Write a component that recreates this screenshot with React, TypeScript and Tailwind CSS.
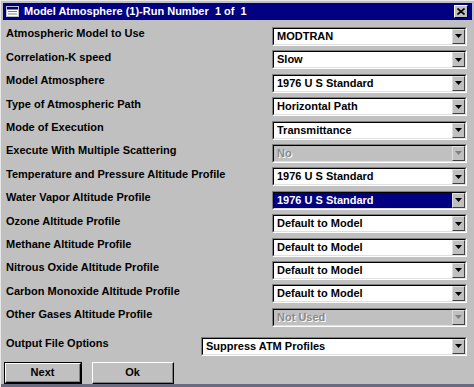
import React from "react";

type Variant = "normal" | "selected" | "disabled";

function Arrow({ disabled }: { disabled?: boolean }) {
  return (
    <div className="h-full w-[13px] shrink-0 bg-[#c0c0c0] border-t border-l border-t-[#dfdfdf] border-l-[#dfdfdf] border-b border-r border-b-[#404040] border-r-[#404040] flex items-center justify-center">
      <svg width="7" height="4" viewBox="0 0 7 4">
        <polygon points="0,0 7,0 3.5,4" fill={disabled ? "#808080" : "#000"} />
      </svg>
    </div>
  );
}

function Drop({ value, variant = "normal", wide }: { value: string; variant?: Variant; wide?: boolean }) {
  const bg =
    variant === "selected" ? "bg-[#000080] text-white" : variant === "disabled" ? "bg-[#c0c0c0] text-[#8a8a8a]" : "bg-white text-black";
  return (
    <div
      className={`${wide ? "w-[266px]" : "w-[195px]"} h-[19px] border-t border-l border-t-[#808080] border-l-[#808080] border-b border-r border-b-white border-r-white`}
    >
      <div className="h-full w-full flex border-t border-l border-t-black border-l-black border-b border-r border-b-[#dfdfdf] border-r-[#dfdfdf]">
        <div
          className={`flex-1 flex items-center pl-[3px] text-[11px] font-bold leading-none ${bg}`}
          style={variant === "disabled" ? { textShadow: "1px 1px 0 #ffffff" } : undefined}
        >
          {value}
        </div>
        <Arrow disabled={variant === "disabled"} />
      </div>
    </div>
  );
}

const rows: { label: string; value: string; variant?: Variant }[] = [
  { label: "Atmospheric Model to Use", value: "MODTRAN" },
  { label: "Correlation-K speed", value: "Slow" },
  { label: "Model Atmosphere", value: "1976 U S Standard" },
  { label: "Type of Atmospheric Path", value: "Horizontal Path" },
  { label: "Mode of Execution", value: "Transmittance" },
  { label: "Execute With Multiple Scattering", value: "No", variant: "disabled" },
  { label: "Temperature and Pressure Altitude Profile", value: "1976 U S Standard" },
  { label: "Water Vapor Altitude Profile", value: "1976 U S Standard", variant: "selected" },
  { label: "Ozone Altitude Profile", value: "Default to Model" },
  { label: "Methane Altitude Profile", value: "Default to Model" },
  { label: "Nitrous Oxide Altitude Profile", value: "Default to Model" },
  { label: "Carbon Monoxide Altitude Profile", value: "Default to Model" },
  { label: "Other Gases Altitude Profile", value: "Not Used", variant: "disabled" },
];

function Button({ label, isDefault, w }: { label: string; isDefault?: boolean; w: string }) {
  return (
    <div className={`${w} h-[22px] ${isDefault ? "border border-black" : ""}`}>
      <div className="h-full w-full border-t border-l border-t-white border-l-white border-b border-r border-b-black border-r-black">
        <div className="h-full w-full flex items-center justify-center border-b border-r border-b-[#808080] border-r-[#808080] text-[11px] font-bold text-black leading-none">
          {label}
        </div>
      </div>
    </div>
  );
}

export default function App() {
  return (
    <div
      className="w-[474px] h-[387px] bg-[#c0c0c0] flex flex-col overflow-hidden border-l border-t border-l-[#e8e8e8] border-t-[#e8e8e8]"
      style={{ fontFamily: '"Liberation Sans", Arial, sans-serif' }}
    >
      <div className="mx-[2px] mt-[2px] h-[17px] bg-[#000080] flex items-center pl-[3px] pr-[4px]">
        <svg width="13" height="11" viewBox="0 0 13 11" className="shrink-0">
          <rect x="0.5" y="0.5" width="12" height="10" fill="#ffffff" stroke="#c0c0c0" />
          <rect x="1" y="1" width="11" height="2.5" fill="#000080" />
          <rect x="2" y="5" width="9" height="1" fill="#808080" />
          <rect x="2" y="7.5" width="9" height="1" fill="#808080" />
        </svg>
        <span className="ml-[5px] text-white text-[11px] font-bold leading-none whitespace-pre">
          {"Model Atmosphere (1)-Run Number  1 of  1"}
        </span>
        <div className="ml-auto w-[14px] h-[13px] bg-[#c0c0c0] border-t border-l border-t-white border-l-white border-b border-r border-b-black border-r-black flex items-center justify-center">
          <svg width="8" height="7" viewBox="0 0 8 7">
            <path d="M0.5 0.5 L7.5 6.5 M7.5 0.5 L0.5 6.5" stroke="#000" strokeWidth="1.6" />
          </svg>
        </div>
      </div>

      <div className="flex flex-col pt-[4.8px] pl-[5px] pr-[7px]">
        {rows.map((r) => (
          <div key={r.label} className="h-[23.4px] flex items-center justify-between">
            <span className="text-[11px] font-bold text-black leading-none pb-[5px]">{r.label}</span>
            <Drop value={r.value} variant={r.variant} />
          </div>
        ))}
        <div className="mt-[5.8px] h-[23.4px] flex items-center justify-between">
          <span className="text-[11px] font-bold text-black leading-none pb-[5px]">Output File Options</span>
          <Drop value="Suppress ATM Profiles" wide />
        </div>
      </div>

      <div className="mt-[3.6px] pl-[3px] flex gap-[10px]">
        <Button label="Next" isDefault w="w-[78px]" />
        <Button label="Ok" w="w-[82px]" />
      </div>

      <div className="mt-auto h-[3px] bg-[#6b6b80]" />
    </div>
  );
}
